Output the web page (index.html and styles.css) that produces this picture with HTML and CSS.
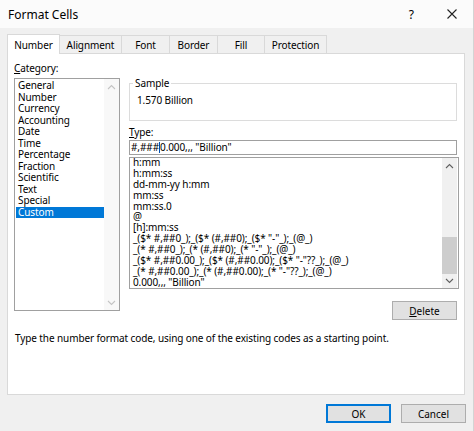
FILE: index.html
```html
<!DOCTYPE html>
<html>
<head>
<meta charset="utf-8">
<link rel="stylesheet" href="styles.css">
</head>
<body>
<div class="dialog">
  <div class="titlebar">
    <span class="title">Format Cells</span>
    <span class="help">?</span>
    <svg class="close" width="10" height="10" viewBox="0 0 10 10"><path d="M0.5 0.5 L9.5 9.5 M9.5 0.5 L0.5 9.5" stroke="#222" stroke-width="1.1" fill="none"/></svg>
  </div>
  <div class="tabs">
    <div class="tab active">Number</div>
    <div class="tab">Alignment</div>
    <div class="tab">Font</div>
    <div class="tab">Border</div>
    <div class="tab">Fill</div>
    <div class="tab">Protection</div>
  </div>
  <div class="panel">
    <div class="main">
      <div class="cat-col">
        <div class="label"><u>C</u>ategory:</div>
        <div class="listbox cat-list">
          <div class="items">
            <div class="item">General</div>
            <div class="item">Number</div>
            <div class="item">Currency</div>
            <div class="item">Accounting</div>
            <div class="item">Date</div>
            <div class="item">Time</div>
            <div class="item">Percentage</div>
            <div class="item">Fraction</div>
            <div class="item">Scientific</div>
            <div class="item">Text</div>
            <div class="item">Special</div>
            <div class="item selected">Custom</div>
          </div>
          <div class="vscroll disabled">
            <svg class="chev" width="9" height="6" viewBox="0 0 9 6"><path d="M1 5 L4.5 1.5 L8 5" stroke="#c4c4c4" stroke-width="1.1" fill="none"/></svg>
            <div class="track"></div>
            <svg class="chev" width="9" height="6" viewBox="0 0 9 6"><path d="M1 1 L4.5 4.5 L8 1" stroke="#c4c4c4" stroke-width="1.1" fill="none"/></svg>
          </div>
        </div>
      </div>
      <div class="right-col">
        <fieldset class="sample">
          <legend>Sample</legend>
          <div class="sample-val">1.570 Billion</div>
        </fieldset>
        <div class="label type-label"><u>T</u>ype:</div>
        <div class="input">#,###<span class="caret"></span>0.000,,, "Billion"</div>
        <div class="listbox fmt-list">
          <div class="items">
            <div class="item">h:mm</div>
            <div class="item">h:mm:ss</div>
            <div class="item">dd-mm-yy h:mm</div>
            <div class="item">mm:ss</div>
            <div class="item">mm:ss.0</div>
            <div class="item">@</div>
            <div class="item">[h]:mm:ss</div>
            <div class="item">_($* #,##0_);_($* (#,##0);_($* "-"_);_(@_)</div>
            <div class="item">_(* #,##0_);_(* (#,##0);_(* "-"_);_(@_)</div>
            <div class="item">_($* #,##0.00_);_($* (#,##0.00);_($* "-"??_);_(@_)</div>
            <div class="item">_(* #,##0.00_);_(* (#,##0.00);_(* "-"??_);_(@_)</div>
            <div class="item">0.000,,, "Billion"</div>
          </div>
          <div class="vscroll">
            <svg class="chev" width="9" height="6" viewBox="0 0 9 6"><path d="M1 5 L4.5 1.5 L8 5" stroke="#606060" stroke-width="1.1" fill="none"/></svg>
            <div class="track"><div class="thumb"></div></div>
            <svg class="chev" width="9" height="6" viewBox="0 0 9 6"><path d="M1 1 L4.5 4.5 L8 1" stroke="#606060" stroke-width="1.1" fill="none"/></svg>
          </div>
        </div>
        <div class="delete-row"><button class="btn"><u>D</u>elete</button></div>
      </div>
    </div>
    <p class="desc">Type the number format code, using one of the existing codes as a starting point.</p>
  </div>
  <div class="footer">
    <button class="btn ok">OK</button>
    <button class="btn">Cancel</button>
  </div>
</div>
</body>
</html>
```

FILE: styles.css
```css
* { box-sizing: border-box; }
html, body { margin: 0; padding: 0; }
body {
  font-family: "Noto Sans", "Open Sans", sans-serif;
  font-size: 10px;
  letter-spacing: -0.1px;
  color: #000;
  background: #f0f0f0;
}
.dialog {
  width: 474px;
  height: 431px;
  background: #f0f0f0;
  display: flex;
  flex-direction: column;
  overflow: hidden;
  border-right: 1px solid #d4d4d4;
}
.titlebar {
  height: 28px;
  background: #fbfbfb;
  display: flex;
  align-items: center;
  padding: 0 0 0 8px;
  letter-spacing: 0;
}
.title { font-size: 12px; flex: 1; }
.help { font-size: 12px; margin-right: 33px; }
.close { margin-right: 16px; }
.tabs {
  display: flex;
  align-items: flex-end;
  height: 25px;
  padding-left: 7px;
}
.tab {
  height: 18px;
  border: 1px solid #d9d9d9;
  border-bottom: none;
  border-left: none;
  background: #f0f0f0;
  padding: 0 4px;
  display: flex;
  align-items: center;
  justify-content: center;
  line-height: 1;
}
.tab.active {
  height: 20px;
  background: #fff;
  border-left: 1px solid #d9d9d9;
  width: 53px;
  margin-bottom: -1px;
  position: relative;
  z-index: 1;
}
.tab:nth-child(2) { width: 62px; }
.tab:nth-child(3) { width: 48px; }
.tab:nth-child(4) { width: 48px; }
.tab:nth-child(5) { width: 47px; }
.tab:nth-child(6) { width: 62px; }
.panel {
  margin: 0 8px 0 7px;
  height: 342px;
  background: #fff;
  border: 1px solid #d9d9d9;
  padding: 8px 6px 0 6px;
}
.main { display: flex; gap: 9px; }
.cat-col { width: 108px; }
.label { height: 16px; line-height: 12px; }
.listbox {
  border: 1px solid #a0a0a0;
  background: #fff;
  display: flex;
}
.listbox .items { flex: 1; padding: 1px 0 0 1px; overflow: hidden; display: flex; flex-direction: column; }
.item { flex: none; height: 11.5px; line-height: 11.5px; padding-left: 5px; white-space: nowrap; }
.cat-list .item { padding-left: 2px; }
.item.selected { background: #0078d7; color: #fff; }
.cat-list { height: 233px; }
.fmt-list .items { padding-top: 0; padding-bottom: 0; justify-content: flex-end; }
.fmt-list .item { height: 10.95px; line-height: 10.95px; padding-left: 2px; }
.vscroll {
  width: 15px;
  display: flex;
  flex-direction: column;
  align-items: center;
  background: #f0f0f0;
  padding: 5px 0 4px;
}
.vscroll.disabled { background: #f8f8f8; }
.vscroll .track { flex: 1; width: 100%; display: flex; flex-direction: column; }
.vscroll .thumb { margin-top: 68px; height: 37px; background: #cdcdcd; }
.right-col { width: 329px; padding-top: 15px; }
.sample {
  margin: 0;
  padding: 5px 0 0 2px;
  height: 44px;
  border: 1px solid #dcdcdc;
  width: 328px;
}
.sample legend { padding: 0 2px; margin-left: 1px; line-height: 12px; }
.sample-val { line-height: 12px; padding-left: 5px; }
.type-label { margin-top: 5px; height: 14px; }
.input {
  height: 15px;
  border: 1px solid #a0a0a0;
  line-height: 13px;
  padding-left: 1px;
  width: 328px;
  white-space: pre;
}
.caret { display: inline-block; width: 1px; height: 11px; background: #0050b0; vertical-align: -2px; }
.fmt-list { height: 132px; margin-top: 2px; width: 330px; }
.fmt-list .vscroll { margin-right: 1px; }
.delete-row { display: flex; justify-content: flex-end; margin-top: 12px; padding-right: 1px; }
.btn {
  font-family: inherit;
  font-size: 10px;
  letter-spacing: 0;
  color: #000;
  width: 65px;
  height: 19px;
  border: 1px solid #adadad;
  background: #e1e1e1;
  padding: 0;
}
.desc { margin: 12px 0 0 1px; line-height: 12px; }
.footer {
  display: flex;
  justify-content: flex-end;
  gap: 10px;
  padding: 9px 7px 0 0;
}
.footer .btn { height: 19px; }
.btn.ok { border: 2px solid #0078d7; }
```
